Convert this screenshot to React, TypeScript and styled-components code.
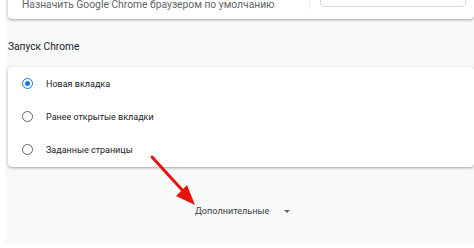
import styled, { createGlobalStyle } from "styled-components";

const GlobalStyle = createGlobalStyle`
  html, body {
    margin: 0;
    padding: 0;
    background: #ffffff;
  }
  body {
    font-family: Roboto, "Noto Sans", Arial, sans-serif;
    color: #202124;
    overflow: hidden;
  }
`;

const Frame = styled.div`
  width: 474px;
  height: 248px;
  padding: 0 0 4px 5px;
  box-sizing: border-box;
  position: relative;
  overflow: hidden;
`;

const Page = styled.div`
  height: 100%;
  background: #f8f9fa;
  padding-left: 3px;
  display: flex;
  flex-direction: column;
  overflow: hidden;
`;

const Card = styled.div<{ $offset?: number }>`
  background: #ffffff;
  border-radius: 4px;
  margin-top: ${(p) => p.$offset ?? 0}px;
  box-shadow: 0 1px 2px rgba(60, 64, 67, 0.3), 0 1px 3px 1px rgba(60, 64, 67, 0.12);
`;

const DefaultRow = styled.div`
  height: 56px;
  display: flex;
  align-items: center;
  padding: 0 8px 0 14px;
  box-sizing: border-box;
`;

const TextCol = styled.div`
  flex: 1;
  align-self: flex-end;
  padding-bottom: 7px;
  font-size: 10.3px;
  line-height: 14px;
  color: #5f6368;
`;

const Separator = styled.div`
  width: 1px;
  height: 36px;
  background: #e8eaed;
  margin-right: 10px;
`;

const OutlineButton = styled.div`
  width: 146px;
  height: 32px;
  border: 1px solid #dadce0;
  border-radius: 4px;
  box-sizing: border-box;
`;

const SectionTitle = styled.div`
  height: 48px;
  padding-top: 21px;
  box-sizing: border-box;
  font-size: 10.2px;
  line-height: 14px;
  color: #202124;
`;

const RadioRow = styled.div`
  height: 33px;
  display: flex;
  align-items: center;
  padding-left: 14px;
  font-size: 9px;
  color: #202124;
`;

const Radio = styled.span<{ $checked?: boolean }>`
  width: 11px;
  height: 11px;
  border-radius: 50%;
  border: 1.5px solid ${(p) => (p.$checked ? "#1a73e8" : "#5f6368")};
  box-sizing: border-box;
  display: flex;
  align-items: center;
  justify-content: center;
  margin-right: 13px;

  &::after {
    content: "";
    width: 5px;
    height: 5px;
    border-radius: 50%;
    background: ${(p) => (p.$checked ? "#1a73e8" : "transparent")};
  }
`;

const Advanced = styled.div`
  margin-top: 37px;
  display: flex;
  align-items: center;
  padding-left: 187px;
  font-size: 9.1px;
  line-height: 14px;
  color: #3c4043;
`;

const Caret = styled.span`
  margin-left: 15px;
  width: 0;
  height: 0;
  border-left: 3px solid transparent;
  border-right: 3px solid transparent;
  border-top: 3px solid #5f6368;
`;

const ArrowOverlay = styled.svg`
  position: absolute;
  left: 0;
  top: 0;
  pointer-events: none;
`;

const options = [
  { label: "Новая вкладка", checked: true },
  { label: "Ранее открытые вкладки", checked: false },
  { label: "Заданные страницы", checked: false },
];

export default function App() {
  return (
    <>
      <GlobalStyle />
      <Frame>
        <Page>
          <Card $offset={-37}>
            <DefaultRow>
              <TextCol>Назначить Google Chrome браузером по умолчанию</TextCol>
              <Separator />
              <OutlineButton />
            </DefaultRow>
          </Card>
          <SectionTitle>Запуск Chrome</SectionTitle>
          <Card>
            {options.map((o) => (
              <RadioRow key={o.label}>
                <Radio $checked={o.checked} />
                {o.label}
              </RadioRow>
            ))}
            <div style={{ height: 1 }} />
          </Card>
          <Advanced>
            Дополнительные
            <Caret />
          </Advanced>
        </Page>
        <ArrowOverlay width="474" height="248" viewBox="0 0 474 248">
          <line x1="152" y1="157" x2="184" y2="192" stroke="#e8120c" strokeWidth="3" strokeLinecap="round" />
          <polygon points="195,205 176,196 187,185" fill="#e8120c" />
        </ArrowOverlay>
      </Frame>
    </>
  );
}
